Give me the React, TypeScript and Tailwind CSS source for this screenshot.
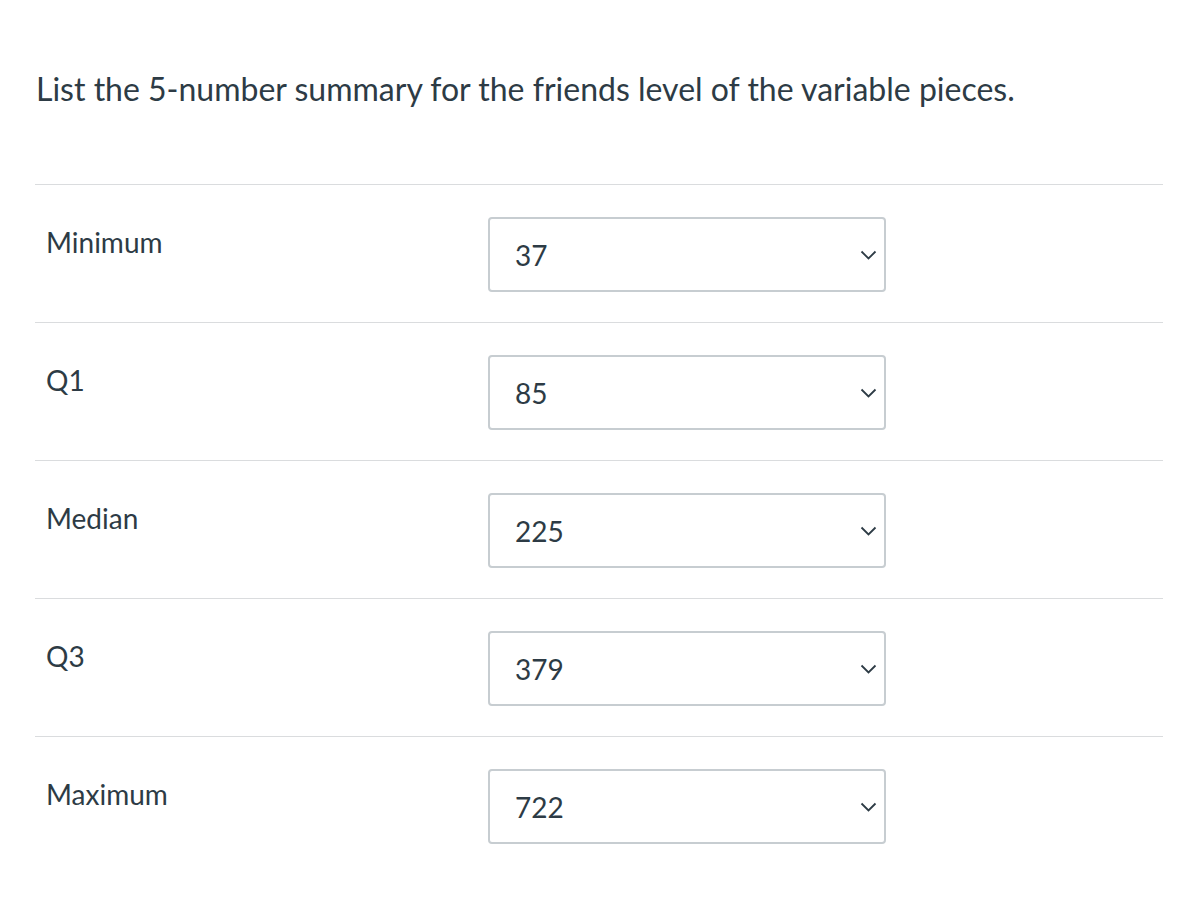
const rows = [
  { label: 'Minimum', value: '37' },
  { label: 'Q1', value: '85' },
  { label: 'Median', value: '225' },
  { label: 'Q3', value: '379' },
  { label: 'Maximum', value: '722' },
]

function Chevron() {
  return (
    <svg width="17" height="10" viewBox="0 0 17 10" fill="none" className="text-[#2d3b45]">
      <path d="M1.5 1.5 L8.5 8.5 L15.5 1.5" stroke="currentColor" strokeWidth="1.8" />
    </svg>
  )
}

export default function App() {
  return (
    <div className="min-h-screen bg-white text-[#2d3b45] font-['Lato','Noto_Sans',sans-serif]">
      <div className="pl-[36px] pr-[25px] pt-[70px]">
        <p className="text-[32px] leading-[38px]">
          List the 5-number summary for the friends level of the variable pieces.
        </p>
        <div className="mt-[76px]">
          {rows.map((r) => (
            <div key={r.label} className="border-t border-[#dadcde] flex -ml-[1px] h-[138px] pt-[32px]">
              <div className="w-[453px] pl-[11px] pt-[8px] text-[28px] leading-[34px]">{r.label}</div>
              <div className="w-[398px] h-[75px] border-2 border-[#c7cdd1] rounded-[4px] flex items-center justify-between pl-[25px] pr-[7px]">
                <span className="text-[28px] leading-[34px] pt-[1px]">{r.value}</span>
                <Chevron />
              </div>
            </div>
          ))}
        </div>
      </div>
    </div>
  )
}
